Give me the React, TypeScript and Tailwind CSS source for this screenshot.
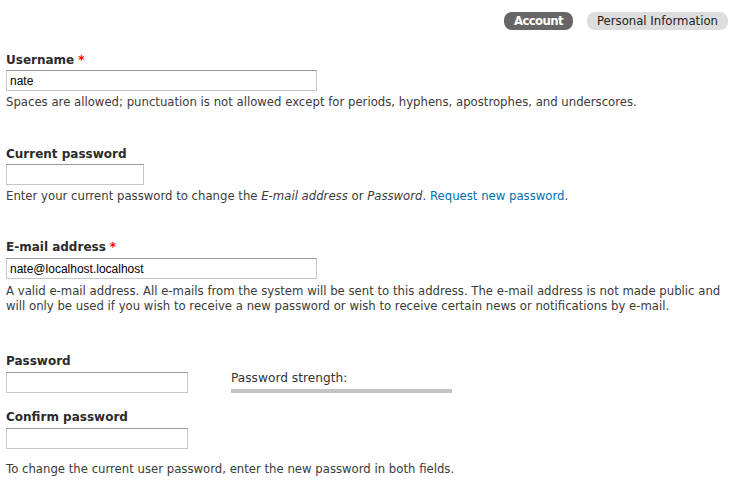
import React from "react";

const font = { fontFamily: '"DejaVu Sans", "Lucida Grande", sans-serif' };

function Req() {
  return <span className="text-[#e00] ml-[4px]">*</span>;
}

function Input({ w, value }: { w: string; value?: string }) {
  return (
    <div
      className={`${w} h-[21px] border border-[#c6c6c6] border-t-[#9a9a9a] bg-white flex items-center px-[3px] text-[12px] text-black`}
      style={{ fontFamily: '"Liberation Sans", Arial, sans-serif' }}
    >
      {value}
    </div>
  );
}

const label = "text-[12px] font-bold text-[#2b2b2b] leading-[16px]";
const desc = "text-[11.7px] leading-[15px]";

export default function App() {
  return (
    <div className="w-[744px] h-[481px] bg-white text-[#3b3b3b] overflow-hidden" style={font}>
      <div className="flex justify-end gap-[14px] pt-[12px] pr-[16px] text-[11.7px]">
        <div className="h-[18px] px-[10px] rounded-[8px] bg-[#666] text-white font-bold tracking-[-0.6px] flex items-center pt-[1px]">Account</div>
        <div className="h-[18px] px-[10px] rounded-[8px] bg-[#ddd] text-[#222] flex items-center pt-[1px]">Personal Information</div>
      </div>

      <div className="px-[6px]">
        <div className={`mt-[22px] ${label}`}>
          Username<Req />
        </div>
        <div className="mt-[2px]"><Input w="w-[311px]" value="nate" /></div>
        <div className={`mt-[4px] ${desc}`}>
          Spaces are allowed; punctuation is not allowed except for periods, hyphens, apostrophes, and underscores.
        </div>

        <div className={`mt-[36px] ${label}`}>Current password</div>
        <div className="mt-[2px]"><Input w="w-[138px]" /></div>
        <div className={`mt-[4px] ${desc}`}>
          Enter your current password to change the <em>E-mail address</em> or <em>Password</em>.{" "}
          <span className="text-[#0071b3]">Request new password</span>.
        </div>

        <div className={`mt-[35px] ${label}`}>
          E-mail address<Req />
        </div>
        <div className="mt-[3px]"><Input w="w-[311px]" value="nate@localhost.localhost" /></div>
        <div className={`mt-[5px] ${desc} pr-[10px]`}>
          A valid e-mail address. All e-mails from the system will be sent to this address. The e-mail address is not made public and will only be used if you wish to receive a new password or wish to receive certain news or notifications by e-mail.
        </div>

        <div className="mt-[39px] flex">
          <div>
            <div className={label}>Password</div>
            <div className="mt-[3px]"><Input w="w-[182px]" /></div>
          </div>
          <div className="ml-[43px] pt-[18px]">
            <div className="text-[12.2px] text-[#333] leading-[15px]">Password strength:</div>
            <div className="mt-[3px] w-[221px] h-[4px] bg-[#c4c4c4]" />
          </div>
        </div>

        <div className={`mt-[16px] ${label}`}>Confirm password</div>
        <div className="mt-[3px]"><Input w="w-[182px]" /></div>
        <div className={`mt-[13px] ${desc}`}>
          To change the current user password, enter the new password in both fields.
        </div>
      </div>
    </div>
  );
}
